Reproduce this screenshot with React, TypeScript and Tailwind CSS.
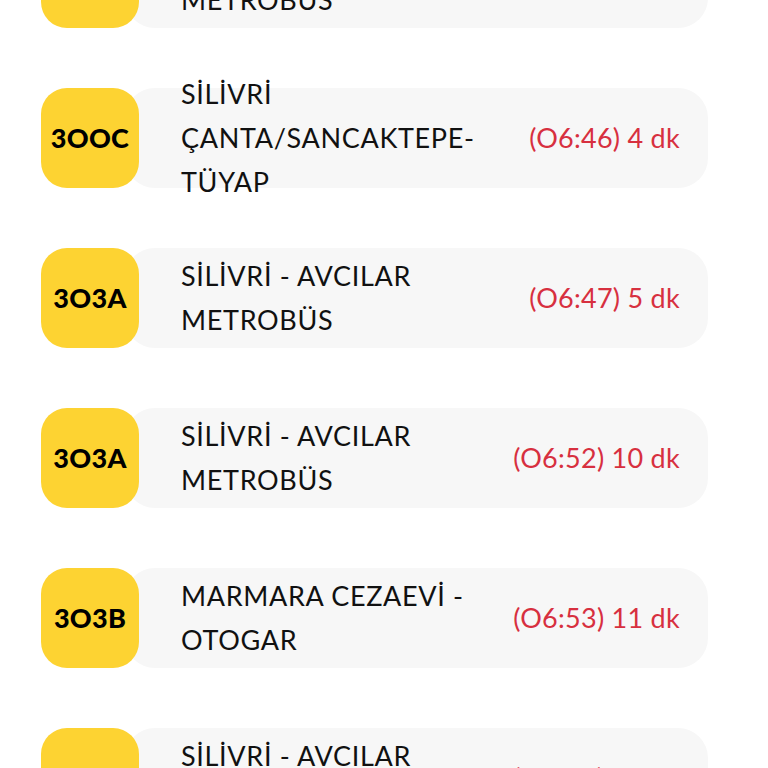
import React from "react";

type Arrival = { line: string; name: string; time: string; mins: number };

const arrivals: Arrival[] = [
  { line: "303A", name: "SİLİVRİ - AVCILAR METROBÜS", time: "06:44", mins: 2 },
  { line: "300C", name: "SİLİVRİ ÇANTA/SANCAKTEPE-TÜYAP", time: "06:46", mins: 4 },
  { line: "303A", name: "SİLİVRİ - AVCILAR METROBÜS", time: "06:47", mins: 5 },
  { line: "303A", name: "SİLİVRİ - AVCILAR METROBÜS", time: "06:52", mins: 10 },
  { line: "303B", name: "MARMARA CEZAEVİ - OTOGAR", time: "06:53", mins: 11 },
  { line: "303A", name: "SİLİVRİ - AVCILAR METROBÜS", time: "06:55", mins: 13 },
];

const roundZero = (s: string) => s.replace(/0/g, "O");

const App: React.FC = () => {
  return (
    <div
      className="min-h-screen overflow-hidden bg-white"
      style={{ fontFamily: "Lato, 'Noto Sans', sans-serif" }}
    >
      {/* list is scrolled: first row partly above the top edge */}
      <div className="-mt-[72px] flex flex-col gap-[60px] pl-[41px] pr-[60px]">
        {arrivals.map((a, i) => (
          <div key={`arr-${i}`} className="flex items-center">
            <div className="relative z-10 flex h-[100px] w-[98px] shrink-0 items-center justify-center rounded-[26px] bg-[#FDD332] text-[27px] font-black tracking-[0.01em] text-black">
              {roundZero(a.line)}
            </div>
            <div className="-ml-[14px] flex h-[100px] flex-1 items-center rounded-[30px] bg-[#F7F7F7] pl-[56px] pr-[28px]">
              <div className="w-[310px] text-[27px] leading-[44px] tracking-[0.025em] text-[#111111]">
                {a.name}
              </div>
              <div className="flex-1 text-right text-[27px] tracking-[0.01em] text-[#D7303F]">
                ({roundZero(a.time)}) {a.mins} dk
              </div>
            </div>
          </div>
        ))}
      </div>
    </div>
  );
};

export default App;
